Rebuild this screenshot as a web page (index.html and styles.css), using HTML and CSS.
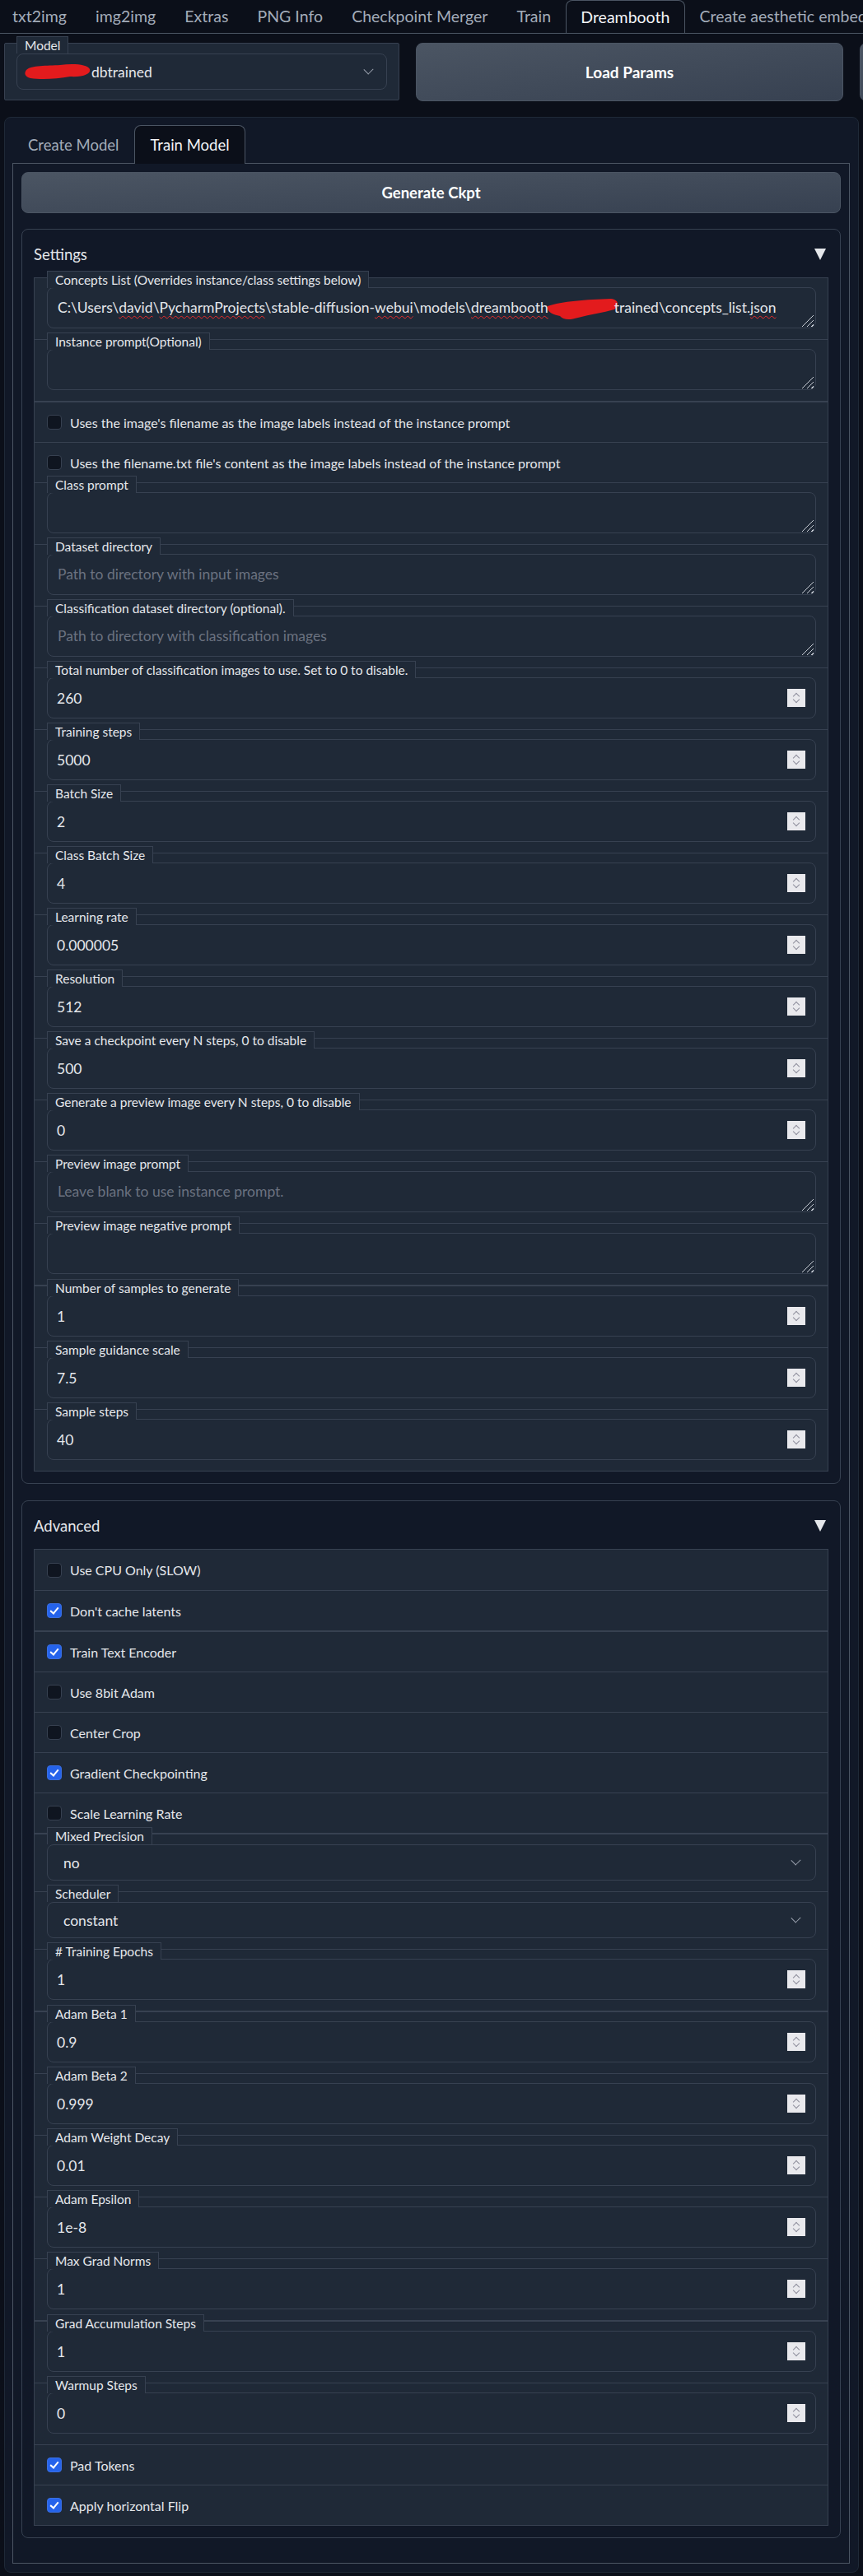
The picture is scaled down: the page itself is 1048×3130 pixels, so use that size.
FILE: index.html
```html
<!DOCTYPE html>
<html lang="en">
<head>
    <meta charset="UTF-8">
    <title>Dreambooth</title>
    <link rel="stylesheet" href="styles.css">
</head>
<body>

<nav class="tabs">
    <span class="tab">txt2img</span>
    <span class="tab">img2img</span>
    <span class="tab">Extras</span>
    <span class="tab">PNG Info</span>
    <span class="tab">Checkpoint Merger</span>
    <span class="tab">Train</span>
    <span class="tab active">Dreambooth</span>
    <span class="tab">Create aesthetic embeddings</span>
</nav>

<div class="top-row">
    <div class="model-box">
        <span class="label">Model</span>
        <div class="select model-select">
            <span class="value"><svg class="blob" width="82" height="22" viewBox="0 0 82 22"><path d="M3 9C9 3 28 4 44 3C60 1 77 2 80 8C82 14 71 18 56 17C40 20 21 21 8 19C1 17 0 13 3 9Z" fill="#e31b1d"/></svg>dbtrained</span>
            <span class="chevron"></span>
        </div>
    </div>
    <button class="btn load">Load Params</button>
    <button class="btn load"></button>
</div>

<div class="panel">
    <div class="subtabs">
        <span class="subtab">Create Model</span>
        <span class="subtab active">Train Model</span>
    </div>

    <div class="tab-body">
        <button class="btn generate">Generate Ckpt</button>

        <section class="group">
            <div class="group-head">
                <span>Settings</span>
                <span class="arrow"></span>
            </div>
            <div class="form">
                <div class="field">
                    <span class="label">Concepts List (Overrides instance/class settings below)</span>
                    <div class="textbox">C:\Users\<span class="typo">david</span>\<span class="typo">PycharmProjects</span>\stable-diffusion-<span class="typo">webui</span>\models\<span class="typo">dreambooth</span><svg class="blob blob-path" width="90" height="28" viewBox="0 0 90 28"><path d="M3 10C20 4 50 2 80 1C90 2 90 10 84 14C70 18 55 20 40 24C30 27 22 27 18 22C10 20 2 18 3 10Z" fill="#e31b1d"/></svg>trained\concepts_list.<span class="typo">json</span></div>
                </div>
                <div class="field">
                    <span class="label">Instance prompt(Optional)</span>
                    <div class="textbox"></div>
                </div>
                <label class="check sep"><span class="box"></span>Uses the image's filename as the image labels instead of the instance prompt</label>
                <label class="check"><span class="box"></span>Uses the filename.txt file's content as the image labels instead of the instance prompt</label>
                <div class="field">
                    <span class="label">Class prompt</span>
                    <div class="textbox"></div>
                </div>
                <div class="field">
                    <span class="label">Dataset directory</span>
                    <div class="textbox placeholder">Path to directory with input images</div>
                </div>
                <div class="field">
                    <span class="label">Classification dataset directory (optional).</span>
                    <div class="textbox placeholder">Path to directory with classification images</div>
                </div>
                <div class="field">
                    <span class="label">Total number of classification images to use. Set to 0 to disable.</span>
                    <div class="num">260<span class="spin"></span></div>
                </div>
                <div class="field">
                    <span class="label">Training steps</span>
                    <div class="num">5000<span class="spin"></span></div>
                </div>
                <div class="field">
                    <span class="label">Batch Size</span>
                    <div class="num">2<span class="spin"></span></div>
                </div>
                <div class="field">
                    <span class="label">Class Batch Size</span>
                    <div class="num">4<span class="spin"></span></div>
                </div>
                <div class="field">
                    <span class="label">Learning rate</span>
                    <div class="num">0.000005<span class="spin"></span></div>
                </div>
                <div class="field">
                    <span class="label">Resolution</span>
                    <div class="num">512<span class="spin"></span></div>
                </div>
                <div class="field">
                    <span class="label">Save a checkpoint every N steps, 0 to disable</span>
                    <div class="num">500<span class="spin"></span></div>
                </div>
                <div class="field">
                    <span class="label">Generate a preview image every N steps, 0 to disable</span>
                    <div class="num">0<span class="spin"></span></div>
                </div>
                <div class="field">
                    <span class="label">Preview image prompt</span>
                    <div class="textbox placeholder">Leave blank to use instance prompt.</div>
                </div>
                <div class="field">
                    <span class="label">Preview image negative prompt</span>
                    <div class="textbox"></div>
                </div>
                <div class="field sep">
                    <span class="label">Number of samples to generate</span>
                    <div class="num">1<span class="spin"></span></div>
                </div>
                <div class="field">
                    <span class="label">Sample guidance scale</span>
                    <div class="num">7.5<span class="spin"></span></div>
                </div>
                <div class="field">
                    <span class="label">Sample steps</span>
                    <div class="num">40<span class="spin"></span></div>
                </div>
            </div>
        </section>

        <section class="group">
            <div class="group-head">
                <span>Advanced</span>
                <span class="arrow"></span>
            </div>
            <div class="form">
                <label class="check"><span class="box"></span>Use CPU Only (SLOW)</label>
                <label class="check"><span class="box on"></span>Don't cache latents</label>
                <label class="check sep"><span class="box on"></span>Train Text Encoder</label>
                <label class="check"><span class="box"></span>Use 8bit Adam</label>
                <label class="check"><span class="box"></span>Center Crop</label>
                <label class="check"><span class="box on"></span>Gradient Checkpointing</label>
                <label class="check"><span class="box"></span>Scale Learning Rate</label>
                <div class="field drop sep">
                    <span class="label">Mixed Precision</span>
                    <div class="select"><span class="value">no</span><span class="chevron"></span></div>
                </div>
                <div class="field drop">
                    <span class="label">Scheduler</span>
                    <div class="select"><span class="value">constant</span><span class="chevron"></span></div>
                </div>
                <div class="field">
                    <span class="label"># Training Epochs</span>
                    <div class="num">1<span class="spin"></span></div>
                </div>
                <div class="field sep">
                    <span class="label">Adam Beta 1</span>
                    <div class="num">0.9<span class="spin"></span></div>
                </div>
                <div class="field">
                    <span class="label">Adam Beta 2</span>
                    <div class="num">0.999<span class="spin"></span></div>
                </div>
                <div class="field">
                    <span class="label">Adam Weight Decay</span>
                    <div class="num">0.01<span class="spin"></span></div>
                </div>
                <div class="field">
                    <span class="label">Adam Epsilon</span>
                    <div class="num">1e-8<span class="spin"></span></div>
                </div>
                <div class="field">
                    <span class="label">Max Grad Norms</span>
                    <div class="num">1<span class="spin"></span></div>
                </div>
                <div class="field sep">
                    <span class="label">Grad Accumulation Steps</span>
                    <div class="num">1<span class="spin"></span></div>
                </div>
                <div class="field">
                    <span class="label">Warmup Steps</span>
                    <div class="num">0<span class="spin"></span></div>
                </div>
                <label class="check"><span class="box on"></span>Pad Tokens</label>
                <label class="check"><span class="box on"></span>Apply horizontal Flip</label>
            </div>
        </section>
    </div>
</div>

</body>
</html>
```

FILE: styles.css
```css
* {
    box-sizing: border-box;
}

body {
    margin: 0;
    background: #0b0f19;
    color: #e5e7eb;
    font-family: Lato, "Noto Sans", sans-serif;
    font-size: 17.5px;
    overflow-x: hidden;
}

/* main tab bar */
.tabs {
    display: flex;
    height: 41px;
    white-space: nowrap;
    border-bottom: 1px solid #4b5563;
    overflow: hidden;
    font-size: 19.5px;
}

.tab {
    flex-shrink: 0;
    padding: 0 17.6px;
    line-height: 40px;
    color: #a3acb9;
}

.tab:first-child {
    padding-left: 15px;
}

.tab.active {
    height: 41px;
    margin-bottom: -1px;
    color: #f3f4f6;
    background: #0b0f19;
    border: 1px solid #4b5563;
    border-bottom: none;
    border-radius: 8px 8px 0 0;
}

/* model row */
.top-row {
    display: flex;
    gap: 20px;
    height: 80px;
    margin-top: 2px;
    padding: 9px 0 0 5px;
    overflow: hidden;
}

.model-box {
    position: relative;
    flex-shrink: 0;
    width: 480px;
    height: 70px;
    padding: 12px 14px;
    background: #1f2937;
    border: 1px solid #374151;
    border-radius: 2px;
}

.model-box .label {
    left: 14px;
}

.btn {
    font-family: inherit;
    color: #fff;
    font-weight: 700;
    background: linear-gradient(to bottom right, #4b5563, #374151);
    border: 1px solid #4b5563;
    border-radius: 8px;
    cursor: pointer;
}

.load {
    flex-shrink: 0;
    width: 519px;
    height: 71px;
    font-size: 19px;
}

/* dreambooth panel */
.panel {
    margin: 19px 5px 0;
    padding: 9px 10px 10px 9px;
    background: #111827;
    border: 1px solid #1f2937;
    border-radius: 8px;
}

.subtabs {
    display: flex;
    height: 46px;
    font-size: 18.5px;
}

.subtab {
    padding: 0 18px;
    line-height: 46px;
    color: #a3acb9;
    border: 1px solid transparent;
}

.subtab.active {
    position: relative;
    height: 47px;
    margin-bottom: -1px;
    color: #f3f4f6;
    background: #0b0f19;
    border-color: #4b5563;
    border-bottom: none;
    border-radius: 8px 8px 0 0;
}

.tab-body {
    padding: 10px 10px 30px;
    border: 1px solid #4b5563;
}

.generate {
    display: block;
    width: 100%;
    height: 50px;
    font-size: 18.5px;
}

.group {
    margin-top: 19px;
    padding: 14px;
    background: #111827;
    border: 1px solid #374151;
    border-radius: 8px;
}

.group + .group {
    margin-top: 20px;
}

.group-head {
    display: flex;
    align-items: center;
    justify-content: space-between;
    height: 32px;
    margin-bottom: 12px;
    font-size: 18.5px;
}

.arrow {
    width: 0;
    height: 0;
    margin-right: 3px;
    border-left: 7px solid transparent;
    border-right: 7px solid transparent;
    border-top: 14px solid #e5e7eb;
}

.form {
    background: #1f2937;
    border: 1px solid #374151;
}

.form > * {
    border-top: 1px solid #374151;
}

.form > :first-child {
    border-top: none;
}

.form > .sep {
    border-top-width: 2px;
}

/* fields */
.field {
    position: relative;
    padding: 11px 14px 13px 15px;
}

.field.drop {
    padding-top: 12px;
}

.label {
    position: absolute;
    top: -9px;
    left: 15px;
    z-index: 2;
    height: 21px;
    padding: 0 9px;
    font-size: 15.5px;
    line-height: 20px;
    color: #e5e7eb;
    background: #1f2937;
    border: 1px solid #374151;
    border-bottom: none;
    white-space: nowrap;
}

.textbox {
    position: relative;
    height: 50px;
    padding: 12px;
    line-height: 24px;
    white-space: nowrap;
    overflow: hidden;
    border: 1px solid #374151;
    border-radius: 8px;
}

.textbox::after {
    content: "";
    position: absolute;
    right: 2px;
    bottom: 1px;
    width: 15px;
    height: 15px;
    background: repeating-linear-gradient(135deg, transparent 0 3px, #c9ced6 3px 4px);
    clip-path: polygon(100% 0, 100% 100%, 0 100%);
}

.placeholder {
    color: #6b7280;
}

.typo {
    text-decoration: underline wavy #ef2b2b;
    text-decoration-thickness: 1px;
    text-underline-offset: 3px;
}

.blob {
    vertical-align: middle;
    margin-left: -4px;
}

.blob-path {
    margin: 0 -6px 0 -4px;
}

.num {
    display: flex;
    align-items: center;
    justify-content: space-between;
    height: 50px;
    padding: 0 12px 0 11px;
    border: 1px solid #374151;
    border-radius: 8px;
}

.spin {
    position: relative;
    width: 22px;
    height: 22px;
    background: #e9e9ed;
}

.spin::before,
.spin::after {
    content: "";
    position: absolute;
    left: 8px;
    width: 5px;
    height: 5px;
    border: solid #8f8f9d;
    transform: rotate(45deg);
}

.spin::before {
    top: 6px;
    border-width: 1.3px 0 0 1.3px;
}

.spin::after {
    top: 10px;
    border-width: 0 1.3px 1.3px 0;
}

/* dropdowns */
.select {
    display: flex;
    align-items: center;
    justify-content: space-between;
    height: 44px;
    padding: 0 19px;
    border: 1px solid #374151;
    border-radius: 8px;
}

.model-select {
    padding: 0 17px 0 12px;
}

.select .value {
    display: flex;
    align-items: center;
}

.chevron {
    width: 9px;
    height: 9px;
    margin-top: -5px;
    border: solid #9ca3af;
    border-width: 0 1.3px 1.3px 0;
    transform: rotate(45deg) scaleX(0.9);
}

/* checkboxes */
.check {
    display: flex;
    align-items: center;
    gap: 10px;
    height: 49px;
    padding: 0 15px;
    font-size: 16px;
}

.check.sep {
    height: 50px;
}

.box {
    position: relative;
    width: 18px;
    height: 18px;
    flex-shrink: 0;
    background: #0f1520;
    border: 1px solid #374151;
    border-radius: 4px;
}

.box.on {
    background: #2563eb;
    border-color: #3b6fe0;
}

.box.on::after {
    content: "";
    position: absolute;
    left: 5px;
    top: 2px;
    width: 4px;
    height: 8px;
    border: solid #fff;
    border-width: 0 2px 2px 0;
    transform: rotate(40deg);
}
```
